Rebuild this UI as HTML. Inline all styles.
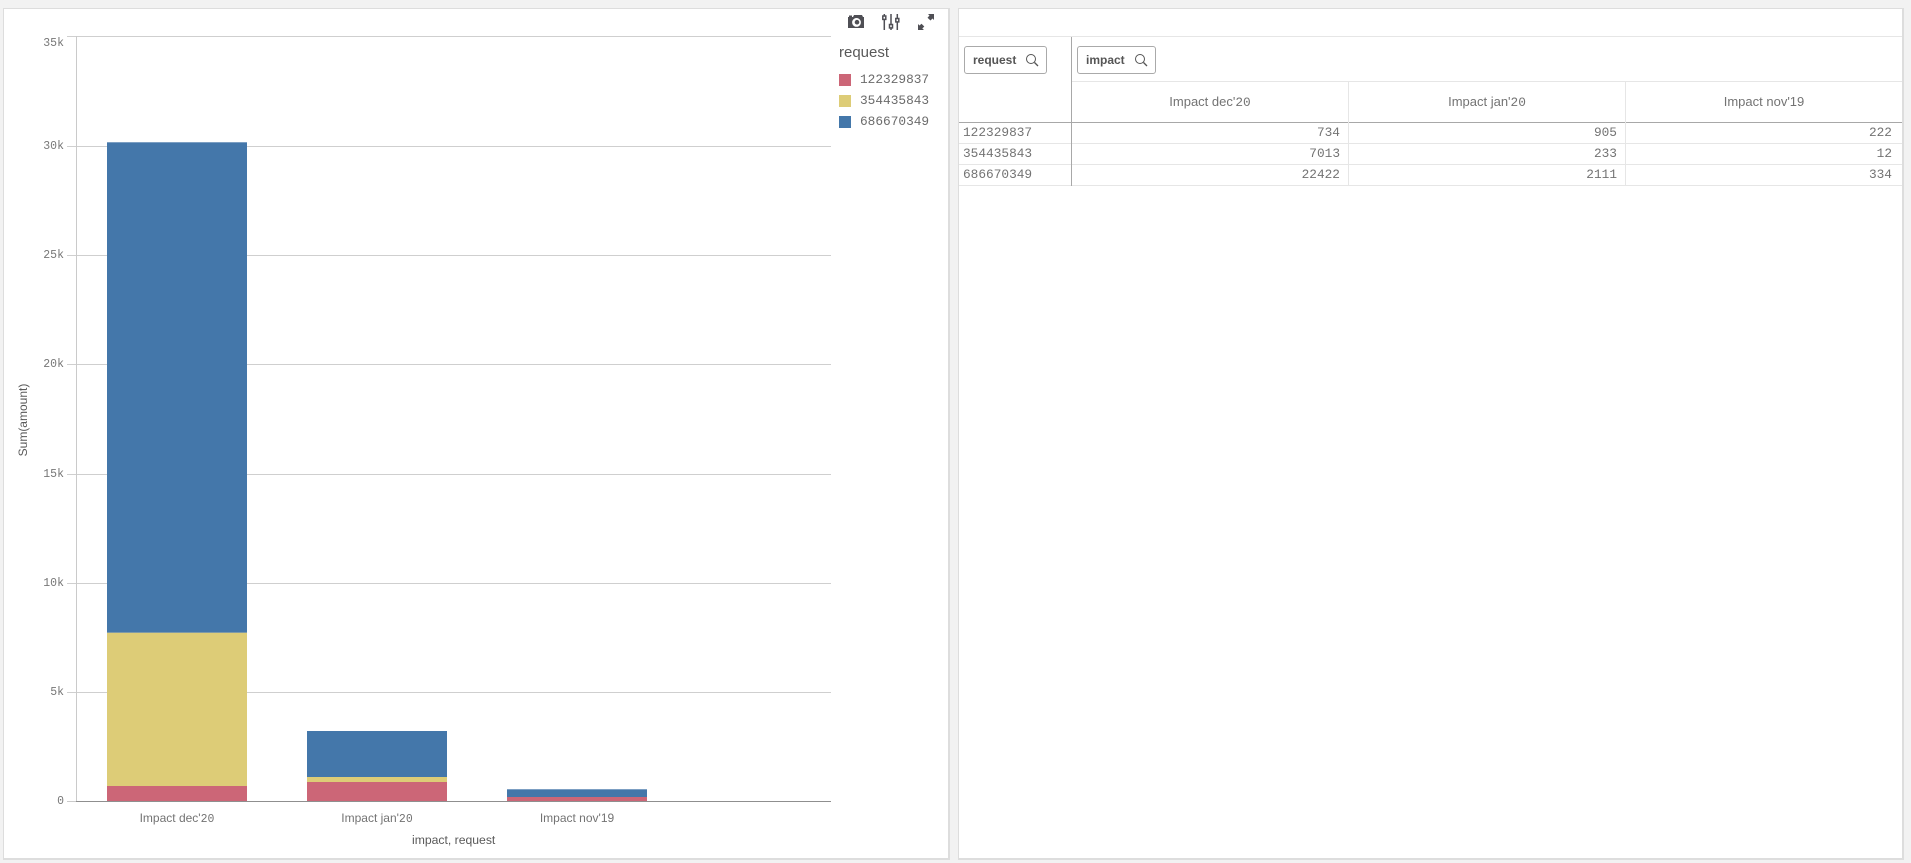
<!DOCTYPE html>
<html><head><meta charset="utf-8"><style>
html,body{margin:0;padding:0;width:1911px;height:863px;overflow:hidden;background:#f2f2f2}
body{position:relative;font-family:"Liberation Sans",sans-serif;color:#595959}
div{position:absolute;box-sizing:border-box}
.t{white-space:nowrap;line-height:16px;height:16px}
.m{font-family:"Liberation Mono",monospace}
.g{left:67px;width:764px;height:1px;background:#cfcfcf}
.yl{left:20px;width:44px;text-align:right;font-family:"Liberation Mono",monospace;font-size:11.5px;color:#777}
.xl{font-size:12px;color:#737373;text-align:center;width:140px;top:810px}
.xl span{font-family:"Liberation Mono",monospace;font-size:11.5px}
.l{height:1px;background:#e6e6e6}
.v{width:1px;background:#e6e6e6;top:81px;height:104px}
.c{font-family:"Liberation Mono",monospace;font-size:12.8px;color:#737373;text-align:right;width:200px}
.h{font-size:13px;color:#737373;text-align:center;top:94px;width:276px}
.h span{font-family:"Liberation Mono",monospace;font-size:12.8px}
.s{left:839px;width:12px;height:12px}
.lg{left:860px;font-family:"Liberation Mono",monospace;font-size:12.8px;color:#6b6b6b}
.b{height:28px;top:46px;border:1px solid #aaa;border-radius:3px;background:#fff}
.b b{position:absolute;left:8px;top:5px;font-size:12px;line-height:16px;color:#555}
</style></head><body>
<div style="left:3px;top:8px;width:947px;height:852px;background:#fff;border-left:1px solid #ddd;border-right:2px solid #ddd;border-bottom:2px solid #ddd;border-top:1px solid #ddd"></div>
<div style="left:958px;top:8px;width:946px;height:852px;background:#fff;border-left:1px solid #ddd;border-right:2px solid #ddd;border-bottom:2px solid #ddd;border-top:1px solid #ddd"></div>

<!-- chart -->
<div class="g" style="top:36px"></div>
<div class="g" style="top:146px"></div>
<div class="g" style="top:255px"></div>
<div class="g" style="top:364px"></div>
<div class="g" style="top:474px"></div>
<div class="g" style="top:583px"></div>
<div class="g" style="top:692px"></div>
<div style="left:76px;top:36px;width:1px;height:765px;background:#cacaca"></div>
<div style="left:67px;top:801px;width:9px;height:1px;background:#cacaca"></div>
<div style="left:76px;top:801px;width:755px;height:1px;background:#8f8f8f"></div>

<div style="left:107px;top:142px;width:140px;height:491px;background:#4477aa"></div>
<div style="left:107px;top:142px;width:140px;height:1px;background:#7c9fc3"></div>
<div style="left:107px;top:632px;width:140px;height:1px;background:#7f9aa6"></div>
<div style="left:107px;top:633px;width:140px;height:153px;background:#ddcc77"></div>
<div style="left:107px;top:786px;width:140px;height:15px;background:#cc6677"></div>

<div style="left:307px;top:731px;width:140px;height:46px;background:#4477aa"></div>
<div style="left:307px;top:777px;width:140px;height:5px;background:#ddcc77"></div>
<div style="left:307px;top:782px;width:140px;height:19px;background:#cc6677"></div>

<div style="left:507px;top:789px;width:140px;height:8px;background:#4477aa"></div>
<div style="left:507px;top:789px;width:140px;height:1px;background:#7c9fc3"></div>
<div style="left:507px;top:797px;width:140px;height:4px;background:#cc6677"></div>

<div class="t yl" style="top:36px">35k</div>
<div class="t yl" style="top:139px">30k</div>
<div class="t yl" style="top:248px">25k</div>
<div class="t yl" style="top:357px">20k</div>
<div class="t yl" style="top:467px">15k</div>
<div class="t yl" style="top:576px">10k</div>
<div class="t yl" style="top:685px">5k</div>
<div class="t yl" style="top:794px">0</div>

<div class="t xl" style="left:107px">Impact dec'<span>20</span></div>
<div class="t xl" style="left:307px">Impact jan'<span>20</span></div>
<div class="t xl" style="left:507px">Impact nov'19</div>
<div class="t" style="left:412px;top:832px;font-size:12.2px;color:#595959">impact, request</div>
<div class="t" style="left:-17px;top:412px;width:80px;text-align:center;font-size:12px;color:#595959;transform:rotate(-90deg)">Sum(amount)</div>

<!-- legend -->
<div class="t" style="left:839px;top:45px;font-size:15px;color:#595959">request</div>
<div class="s" style="top:74px;background:#cc6677"></div>
<div class="s" style="top:95px;background:#ddcc77"></div>
<div class="s" style="top:116px;background:#4477aa"></div>
<div class="t lg" style="top:72px">122329837</div>
<div class="t lg" style="top:93px">354435843</div>
<div class="t lg" style="top:114px">686670349</div>

<!-- toolbar icons -->
<svg style="position:absolute;left:846px;top:12px" width="20" height="18" viewBox="0 0 20 18"><path fill="#4f4f55" fill-rule="evenodd" d="M2 5h1V3.5h3V5h1l1-2h8l1 2h1v11H2z M10.5 6a4.4 4.4 0 1 0 .01 0z"/><circle cx="11" cy="10.2" r="2.3" fill="#4f4f55"/></svg>
<svg style="position:absolute;left:882px;top:13px" width="18" height="18" viewBox="0 0 18 18" fill="none" stroke="#4f4f55" stroke-width="1.5"><path d="M2.3 1v16M9 1v16M15.3 1v16"/><rect x="0.8" y="3" width="3" height="3.4" fill="#fff"/><rect x="7.5" y="11.5" width="3" height="3.4" fill="#fff"/><rect x="13.8" y="5.5" width="3" height="3.4" fill="#fff"/></svg>
<svg style="position:absolute;left:917px;top:13px" width="18" height="18" viewBox="0 0 18 18" fill="#4f4f55"><path d="M11 1h6v6l-1.5-1.5-2 2-3-2.8 2-2.2z M1 11l1.5 1.5 2-1.8 2.8 2.8-2 2 1.7 1.5H1z"/></svg>

<!-- table -->
<div class="l" style="left:959px;top:36px;width:943px"></div>
<div class="l" style="left:1072px;top:81px;width:830px"></div>
<div style="left:959px;top:122px;width:943px;height:1px;background:#a8a8a8"></div>
<div class="l" style="left:959px;top:143px;width:943px"></div>
<div class="l" style="left:959px;top:164px;width:943px"></div>
<div class="l" style="left:959px;top:185px;width:943px"></div>
<div style="left:1071px;top:37px;width:1px;height:149px;background:#a8a8a8"></div>
<div class="v" style="left:1348px"></div>
<div class="v" style="left:1625px"></div>

<div class="b" style="left:964px;width:83px"><b>request</b>
<svg style="position:absolute;left:60px;top:6px" width="14" height="14" viewBox="0 0 14 14" fill="none" stroke="#555" stroke-width="1"><circle cx="6" cy="6" r="4.5"/><path d="M9.5 9.5l3.5 3.5" stroke-width="1.3"/></svg></div>
<div class="b" style="left:1077px;width:79px"><b>impact</b>
<svg style="position:absolute;left:56px;top:6px" width="14" height="14" viewBox="0 0 14 14" fill="none" stroke="#555" stroke-width="1"><circle cx="6" cy="6" r="4.5"/><path d="M9.5 9.5l3.5 3.5" stroke-width="1.3"/></svg></div>

<div class="t h" style="left:1072px">Impact dec'<span>20</span></div>
<div class="t h" style="left:1349px">Impact jan'<span>20</span></div>
<div class="t h" style="left:1626px">Impact nov'19</div>

<div class="t c" style="left:963px;top:125px;text-align:left">122329837</div>
<div class="t c" style="left:963px;top:146px;text-align:left">354435843</div>
<div class="t c" style="left:963px;top:167px;text-align:left">686670349</div>
<div class="t c" style="left:1140px;top:125px">734</div>
<div class="t c" style="left:1140px;top:146px">7013</div>
<div class="t c" style="left:1140px;top:167px">22422</div>
<div class="t c" style="left:1417px;top:125px">905</div>
<div class="t c" style="left:1417px;top:146px">233</div>
<div class="t c" style="left:1417px;top:167px">2111</div>
<div class="t c" style="left:1692px;top:125px">222</div>
<div class="t c" style="left:1692px;top:146px">12</div>
<div class="t c" style="left:1692px;top:167px">334</div>
</body></html>
